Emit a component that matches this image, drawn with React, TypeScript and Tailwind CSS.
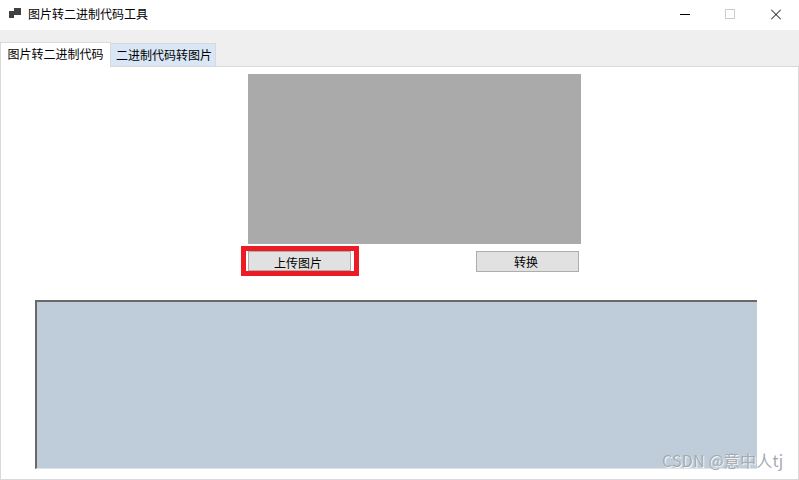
export default function App() {
  return (
    <div className="relative flex h-[480px] w-[799px] flex-col overflow-hidden bg-white font-['Noto_Sans_CJK_SC','Noto_Sans',sans-serif] text-[12px] text-black">
      <div className="flex h-[30px] items-start">
        <svg className="ml-[9px] mt-[8px] h-[11px] w-[12px]" viewBox="0 0 12 11" fill="#404040">
          <rect x="0" y="3" width="5" height="7" />
          <rect x="5" y="0" width="7" height="7" />
        </svg>
        <span className="ml-[7px] leading-[28px]">图片转二进制代码工具</span>
        <div className="ml-auto flex h-[28px] items-center">
          <svg className="mr-[35px] h-[11px] w-[10px]" viewBox="0 0 10 11"><path d="M0 5.5H10" stroke="#000" strokeWidth="1" /></svg>
          <svg className="mr-[36px] h-[11px] w-[10px]" viewBox="0 0 10 11"><rect x="0.5" y="0.5" width="9" height="9" fill="none" stroke="#cccccc" strokeWidth="1" /></svg>
          <svg className="mr-[18px] h-[11px] w-[10px]" viewBox="0 0 10 11"><path d="M0 0.5L10 10.5M10 0.5L0 10.5" stroke="#000" strokeWidth="1" /></svg>
        </div>
      </div>
      <div className="flex h-[37px] items-end border-b border-[#d9d9d9] bg-[#efefef]">
        <div className="z-10 -mb-px flex h-[25px] w-[111px] items-start justify-center border border-b-0 border-[#d9d9d9] bg-white pt-[2px] leading-[18px]">图片转二进制代码</div>
        <div className="flex h-[23px] w-[105px] items-center justify-center border border-l-0 border-b-0 border-[#d9d9d9] bg-[#d8e6f5] pl-[2px] leading-[18px]">二进制代码转图片</div>
      </div>
      <div className="flex flex-1 flex-col border-x border-b border-[#d9d9d9] bg-white">
        <div className="ml-[247px] mt-[7px] h-[170px] w-[333px] bg-[#aaaaaa]" />
        <div className="mt-[2px] flex h-[30px] items-start">
          <div className="ml-[240px] h-[30px] w-[118px] border-[5px] border-[#ed1c24] pl-[2px] pr-[3px]">
            <button className="block h-[20px] w-[103px] border border-[#adadad] bg-[#e1e1e1] pr-[3px] pt-[2px] text-[12px] leading-[18px]">上传图片</button>
          </div>
          <button className="ml-[117px] mt-[5px] h-[21px] w-[103px] border border-[#adadad] bg-[#e1e1e1] pr-[3px] pt-[1px] text-[12px] leading-[18px]">转换</button>
        </div>
        <div className="ml-[34px] mt-[24px] h-[169px] w-[722px] border-b border-l-2 border-t-2 border-b-[#e3e3e3] border-l-[#696969] border-t-[#696969] bg-[#bfcddb]" />
      </div>
      <div className="absolute left-[662px] top-[450px] text-[16px] leading-[20px] tracking-[0.2px] text-[#a6aaae] [text-shadow:1px_1px_1px_#ffffff]">CSDN @意中人tj</div>
    </div>
  );
}
